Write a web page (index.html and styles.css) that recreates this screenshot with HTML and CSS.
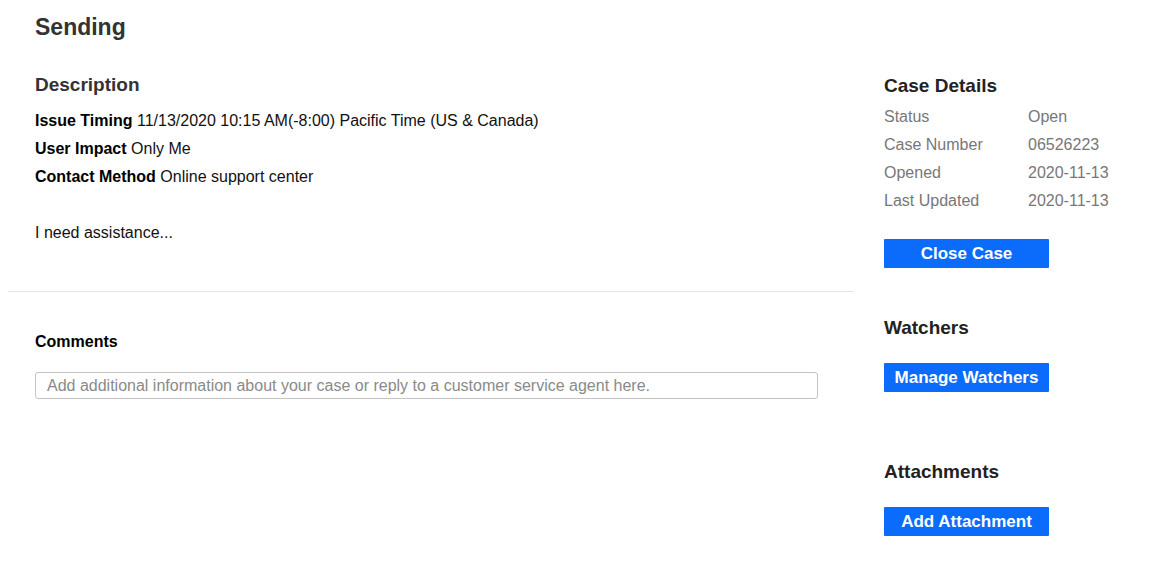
FILE: index.html
```html
<!DOCTYPE html>
<html lang="en">
<head>
    <meta charset="UTF-8">
    <title>Case - Sending</title>
    <link rel="stylesheet" href="styles.css">
</head>
<body>
    <div class="page">
        <div class="main">
            <div class="description">
                <h1>Sending</h1>
                <h2>Description</h2>
                <div class="field"><strong>Issue Timing</strong> 11/13/2020 10:15 AM(-8:00) Pacific Time (US &amp; Canada)</div>
                <div class="field"><strong>User Impact</strong> Only Me</div>
                <div class="field"><strong>Contact Method</strong> Online support center</div>
                <p class="body-text">I need assistance...</p>
            </div>
            <div class="comments">
                <h3>Comments</h3>
                <input type="text" class="comment-input" placeholder="Add additional information about your case or reply to a customer service agent here.">
            </div>
        </div>

        <div class="sidebar">
            <div class="panel details">
                <h2>Case Details</h2>
                <div class="detail"><span class="key">Status</span><span>Open</span></div>
                <div class="detail"><span class="key">Case Number</span><span>06526223</span></div>
                <div class="detail"><span class="key">Opened</span><span>2020-11-13</span></div>
                <div class="detail"><span class="key">Last Updated</span><span>2020-11-13</span></div>
                <button class="btn">Close Case</button>
            </div>
            <div class="panel watchers">
                <h2>Watchers</h2>
                <button class="btn">Manage Watchers</button>
            </div>
            <div class="panel">
                <h2>Attachments</h2>
                <button class="btn">Add Attachment</button>
            </div>
        </div>
    </div>
</body>
</html>
```

FILE: styles.css
```css
body {
    margin: 0;
    font-family: "Liberation Sans", Arial, sans-serif;
    font-size: 16px;
    color: #111;
    background: #fff;
}
.page {
    display: flex;
    padding: 0 8px;
}
.main {
    width: 846px;
}
.description {
    padding: 14px 27px 44px;
    border-bottom: 1px solid #e6e6e6;
}
h1 {
    font-size: 23px;
    color: #333;
    margin: 0 0 33px;
}
h2 {
    font-size: 19px;
    color: #333;
    margin: 0 0 11px;
}
.field {
    line-height: 28px;
}
.field strong {
    color: #000;
}
.body-text {
    margin: 28px 0 0;
    line-height: 28px;
}
.comments {
    padding: 41px 36px 0 27px;
}
h3 {
    font-size: 16px;
    color: #000;
    margin: 0 0 21px;
}
.comment-input {
    display: block;
    width: 100%;
    box-sizing: border-box;
    height: 27px;
    padding: 0 11px;
    border: 1px solid #c4c4c4;
    border-radius: 3px;
    font-family: inherit;
    font-size: 16px;
}
.comment-input::placeholder {
    color: #8a8a8a;
}
.sidebar {
    margin-left: 30px;
    padding-top: 75px;
}
.panel {
    margin-bottom: 58px;
}
.panel.details {
    margin-bottom: 49px;
}
.panel.watchers {
    margin-bottom: 69px;
}
.panel h2 {
    color: #222;
    margin-bottom: 6px;
}
.detail {
    display: flex;
    line-height: 28px;
    color: #777;
}
.detail .key {
    width: 144px;
}
.btn {
    display: block;
    width: 165px;
    height: 29px;
    margin-top: 24px;
    background-color: #0b6cfb;
    color: #fff;
    border: none;
    border-radius: 1px;
    font-family: inherit;
    font-size: 17px;
    font-weight: bold;
    cursor: pointer;
}
.panel h2 + .btn {
    margin-top: 24px;
}
```
